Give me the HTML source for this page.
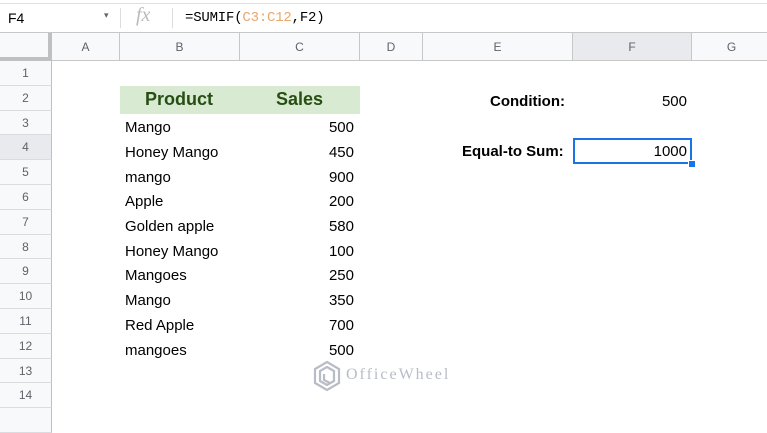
<!DOCTYPE html><html><head><style>
body{margin:0;width:767px;height:414px;overflow:hidden;background:#fff;font-family:"Liberation Sans",Arial,sans-serif;position:relative}
.a{position:absolute}
.rh{position:absolute;left:0;width:52px;background:#f8f9fa;border-bottom:1px solid #dadce0;box-sizing:border-box;text-align:center;color:#5f6368;font-size:12px;border-right:1px solid #c0c0c0}
.ch{position:absolute;top:33px;height:28px;line-height:28px;text-align:center;background:#f8f9fa;border-right:1px solid #c7c7c7;border-bottom:1px solid #c7c7c7;box-sizing:border-box;color:#5f6368;font-size:12px}
.t{position:absolute;font-size:15px;color:#000}
.n{position:absolute;font-size:15px;color:#000;text-align:right}
</style></head><body>
<div class="a" style="left:0;top:3px;width:767px;height:1px;background:#e0e0e0"></div>
<div class="a" style="left:8px;top:10px;font-size:14px">F4</div>
<div class="a" style="left:104px;top:10px;font-size:9px;color:#666">▾</div>
<div class="a" style="left:120px;top:8px;width:1px;height:20px;background:#dadce0"></div>
<div class="a" style="left:136px;top:4px;font-family:'Liberation Serif',serif;font-style:italic;font-size:20px;color:#bbb">fx</div>
<div class="a" style="left:172px;top:8px;width:1px;height:20px;background:#dadce0"></div>
<div class="a" style="left:185px;top:10px;font-size:14px;font-family:'Liberation Mono',monospace;letter-spacing:-0.2px">=SUMIF(<span style="color:#e8a76b">C3:C12</span>,F2)</div>
<div class="a" style="left:0;top:32px;width:767px;height:1px;background:#c7c7c7"></div>
<div class="a" style="left:0;top:33px;width:52px;height:28px;background:#f8f9fa;border-right:4px solid #c0c0c0;border-bottom:4px solid #c0c0c0;box-sizing:border-box"></div>
<div class="ch" style="left:52px;width:68px">A</div>
<div class="ch" style="left:120px;width:120px">B</div>
<div class="ch" style="left:240px;width:120px">C</div>
<div class="ch" style="left:360px;width:63px">D</div>
<div class="ch" style="left:423px;width:150px">E</div>
<div class="ch" style="left:573px;width:119px;background:#e8eaed">F</div>
<div class="ch" style="left:692px;width:80px">G</div>
<div class="rh" style="top:61px;height:24.8px;line-height:24px">1</div>
<div class="rh" style="top:85.8px;height:24.8px;line-height:24px">2</div>
<div class="rh" style="top:110.6px;height:24.8px;line-height:24px">3</div>
<div class="rh" style="top:135.4px;height:24.8px;line-height:24px;background:#e8eaed">4</div>
<div class="rh" style="top:160.2px;height:24.8px;line-height:24px">5</div>
<div class="rh" style="top:185px;height:24.8px;line-height:24px">6</div>
<div class="rh" style="top:209.8px;height:24.8px;line-height:24px">7</div>
<div class="rh" style="top:234.6px;height:24.8px;line-height:24px">8</div>
<div class="rh" style="top:259.4px;height:24.8px;line-height:24px">9</div>
<div class="rh" style="top:284.2px;height:24.8px;line-height:24px">10</div>
<div class="rh" style="top:309px;height:24.8px;line-height:24px">11</div>
<div class="rh" style="top:333.8px;height:24.8px;line-height:24px">12</div>
<div class="rh" style="top:358.6px;height:24.8px;line-height:24px">13</div>
<div class="rh" style="top:383.4px;height:24.8px;line-height:24px">14</div>
<div class="rh" style="top:408.2px;height:24.8px"></div>
<div class="a" style="left:120px;top:86px;width:240px;height:28px;background:#d9ead3"></div>
<div class="a" style="left:145px;top:89px;font-size:18px;font-weight:bold;color:#274e13">Product</div>
<div class="a" style="left:276px;top:89px;font-size:18px;font-weight:bold;color:#274e13">Sales</div>
<div class="t" style="left:125px;top:119px">Mango</div><div class="n" style="left:280px;width:74px;top:119px">500</div>
<div class="t" style="left:125px;top:144px">Honey Mango</div><div class="n" style="left:280px;width:74px;top:144px">450</div>
<div class="t" style="left:125px;top:169px">mango</div><div class="n" style="left:280px;width:74px;top:169px">900</div>
<div class="t" style="left:125px;top:193px">Apple</div><div class="n" style="left:280px;width:74px;top:193px">200</div>
<div class="t" style="left:125px;top:218px">Golden apple</div><div class="n" style="left:280px;width:74px;top:218px">580</div>
<div class="t" style="left:125px;top:243px">Honey Mango</div><div class="n" style="left:280px;width:74px;top:243px">100</div>
<div class="t" style="left:125px;top:267px">Mangoes</div><div class="n" style="left:280px;width:74px;top:267px">250</div>
<div class="t" style="left:125px;top:292px">Mango</div><div class="n" style="left:280px;width:74px;top:292px">350</div>
<div class="t" style="left:125px;top:317px">Red Apple</div><div class="n" style="left:280px;width:74px;top:317px">700</div>
<div class="t" style="left:125px;top:342px">mangoes</div><div class="n" style="left:280px;width:74px;top:342px">500</div>
<div class="a" style="left:490px;top:93px;font-size:15px;font-weight:bold">Condition:</div>
<div class="n" style="left:600px;width:87px;top:93px">500</div>
<div class="a" style="left:462px;top:143px;font-size:15px;font-weight:bold">Equal-to Sum:</div>
<div class="a" style="left:573px;top:138px;width:119px;height:26px;border:2px solid #1a73e8;box-sizing:border-box"></div>
<div class="n" style="left:600px;width:87px;top:143px">1000</div>
<div class="a" style="left:688px;top:160px;width:6px;height:6px;background:#1a73e8;border:1px solid #fff"></div>
<svg class="a" style="left:312px;top:360px" width="30" height="32" viewBox="0 0 30 32"><g fill="none" stroke="#b8bcc6" stroke-width="2.2"><path d="M15 2 L27 9 V23 L15 30 L3 23 V9 Z"/><path d="M15 7 L22 11 V21 L15 25 L8 21 V11 Z"/><path d="M12 14 V20 L18 23"/></g></svg>
<div class="a" style="left:346px;top:366px;font-family:'Liberation Serif',serif;font-size:16px;color:#b8bcc6;letter-spacing:2px">OfficeWheel</div>
</body></html>
